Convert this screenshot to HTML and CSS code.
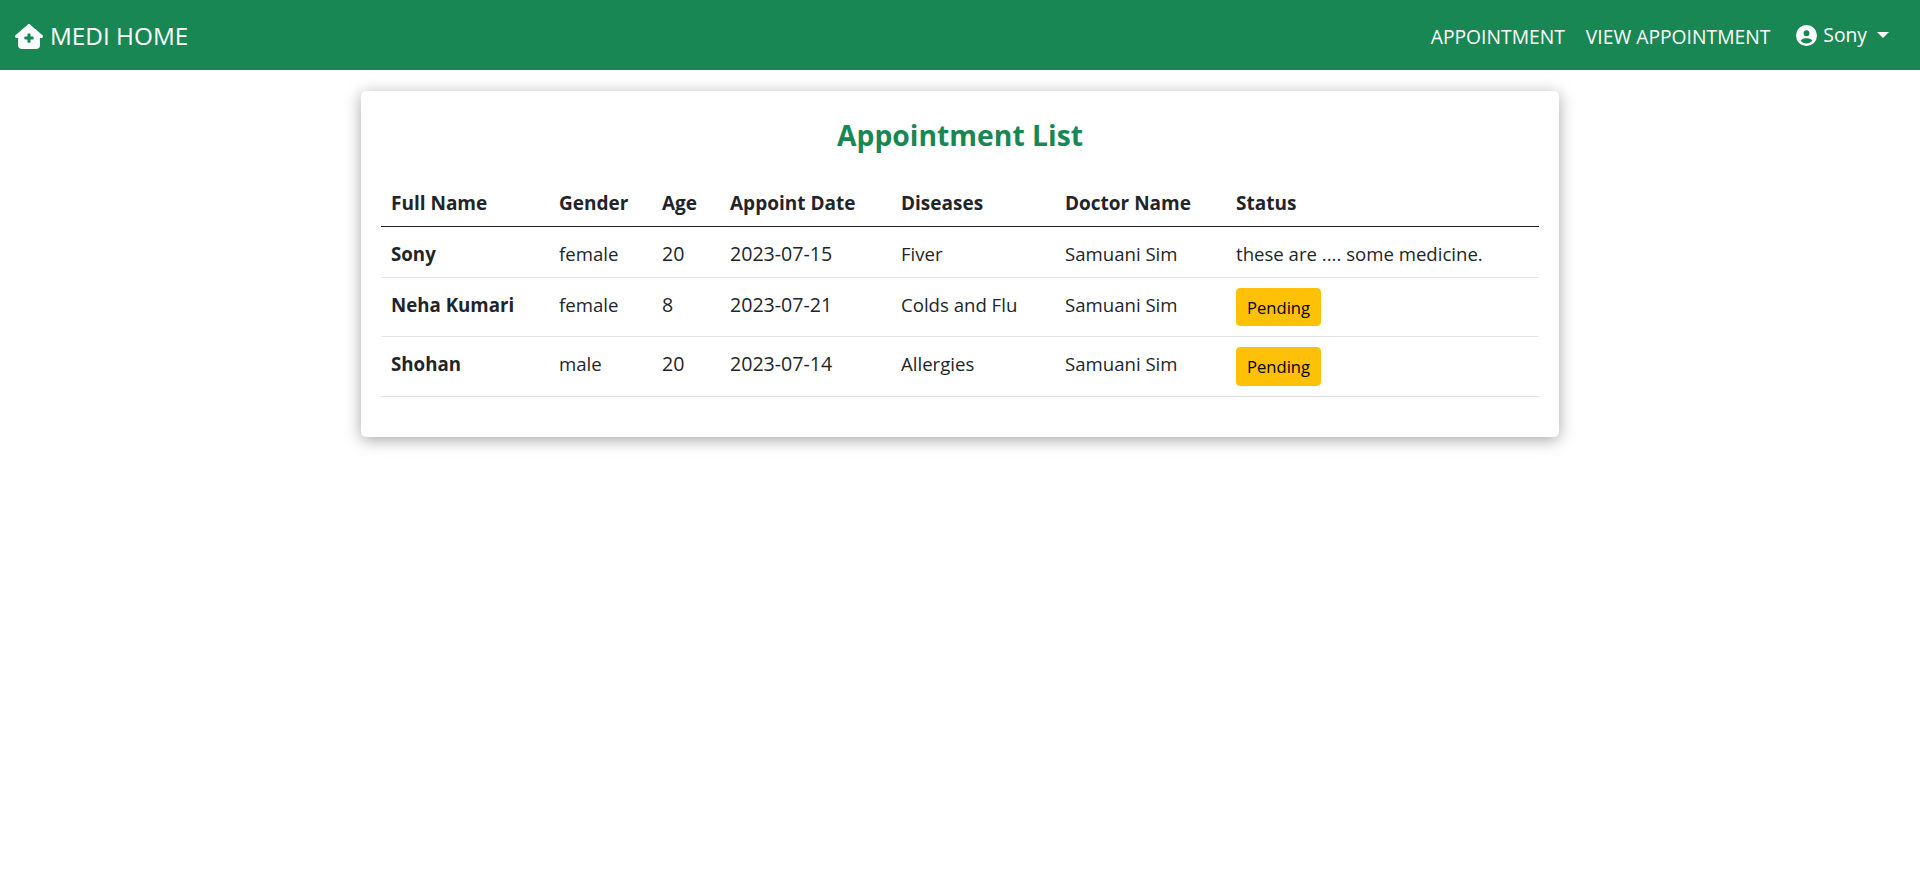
FILE: index.html
```html
<!DOCTYPE html>
<html lang="en">
<head>
<meta charset="UTF-8">
<title>Appointment List</title>
<link rel="stylesheet" href="styles.css">
</head>
<body>
<nav class="navbar">
    <a class="brand" href="#">
        <svg class="brand-icon" viewBox="0 0 576 512"><path fill-rule="evenodd" d="M543.8 287.6c17 0 32-14 32-32.1c1-9-3-17-11-24L309.5 7c-6-5-14-7-21.5-7s-15 1-22 8L10 231.5c-7 7-10 15-10 24c0 18 14 32 32 32h32V448c0 35.3 28.7 64 64 64H448.5c35.5 0 64.2-28.8 64-64.3l-.7-160.2h32zM256 208c0-8.8 7.2-16 16-16h32c8.8 0 16 7.2 16 16v48h48c8.8 0 16 7.2 16 16v32c0 8.8-7.2 16-16 16H320v48c0 8.8-7.2 16-16 16H272c-8.8 0-16-7.2-16-16V320H208c-8.8 0-16-7.2-16-16V272c0-8.8 7.2-16 16-16h48V208z"/></svg>
        MEDI HOME
    </a>
    <div class="nav-links">
        <a class="nav-link" href="#">APPOINTMENT</a>
        <a class="nav-link" href="#">VIEW APPOINTMENT</a>
        <a class="nav-user" href="#">
            <svg class="user-icon" viewBox="0 0 512 512"><path d="M399 384.2C376.9 345.8 335.4 320 288 320H224c-47.4 0-88.9 25.8-111 64.2c35.2 39.2 86.2 63.8 143 63.8s107.8-24.7 143-63.8zM0 256a256 256 0 1 1 512 0A256 256 0 1 1 0 256zm256 16a72 72 0 1 0 0-144 72 72 0 1 0 0 144z"/></svg>
            Sony
            <span class="caret"></span>
        </a>
    </div>
</nav>
<main class="card">
    <h3 class="card-title">Appointment List</h3>
    <table class="table">
        <colgroup>
            <col class="col-name">
            <col class="col-gender">
            <col class="col-age">
            <col class="col-date">
            <col class="col-disease">
            <col class="col-doctor">
            <col>
        </colgroup>
        <thead>
            <tr><th>Full Name</th><th>Gender</th><th>Age</th><th>Appoint Date</th><th>Diseases</th><th>Doctor Name</th><th>Status</th></tr>
        </thead>
        <tbody>
            <tr><th>Sony</th><td>female</td><td class="num">20</td><td class="num">2023-07-15</td><td>Fiver</td><td>Samuani Sim</td><td>these are .... some medicine.</td></tr>
            <tr><th>Neha Kumari</th><td>female</td><td class="num">8</td><td class="num">2023-07-21</td><td>Colds and Flu</td><td>Samuani Sim</td><td class="btn-cell"><a class="badge-btn" href="#">Pending</a></td></tr>
            <tr><th>Shohan</th><td>male</td><td class="num">20</td><td class="num">2023-07-14</td><td>Allergies</td><td>Samuani Sim</td><td class="btn-cell"><a class="badge-btn" href="#">Pending</a></td></tr>
        </tbody>
    </table>
</main>
</body>
</html>
```

FILE: styles.css
```css
html, body { height: 100%; }
body { margin: 0; font-family: "Open Sans", "Noto Sans", sans-serif; font-size: 18.6px; line-height: 30px; color: #212529; background: #fff; }
a { color: inherit; text-decoration: none; }

.navbar { display: flex; justify-content: space-between; align-items: center; box-sizing: border-box; height: 70px; padding: 2px 31px 0 15px; background: #198754; color: #fff; }
.brand { display: flex; align-items: center; gap: 7px; font-size: 24.3px; }
.brand-icon { width: 28px; height: 25px; fill: #fff; }
.nav-links { display: flex; align-items: center; gap: 21px; padding-top: 2px; font-size: 19.3px; }
.nav-user { display: flex; align-items: center; gap: 6px; margin-left: 5px; margin-top: -4px; }
.user-icon { width: 21px; height: 21px; fill: #fff; }
.caret { width: 0; height: 0; margin-left: 4px; border-top: 6px solid #fff; border-left: 6px solid transparent; border-right: 6px solid transparent; }

.card { width: 1158px; margin: 21px auto 0; padding: 20px 20px 40px; border-radius: 5px; background: #fff; box-shadow: 0 3px 16px rgba(0, 0, 0, 0.35); }
.card-title { margin: 0 0 15px; font-size: 28.3px; line-height: 49px; font-weight: 700; text-align: center; color: #198754; }

.table { width: 100%; table-layout: fixed; border-collapse: collapse; }
.col-name { width: 168px; }
.col-gender { width: 103px; }
.col-age { width: 68px; }
.col-date { width: 171px; }
.col-disease { width: 164px; }
.col-doctor { width: 171px; }
.table th, .table td { padding: 12px 10px 8px; text-align: left; vertical-align: top; border-bottom: 1px solid #dee2e6; font-weight: 400; white-space: nowrap; }
.table th { font-size: 18.7px; font-weight: 700; }
.table thead th { padding: 13px 10px 8px; font-size: 19px; border-bottom: 1px solid #212529; }
.table .num { font-size: 19.6px; }
.table .btn-cell { padding: 10px; }
.badge-btn { display: inline-block; padding: 6px 10px 4px; border: 1px solid #ffc107; border-radius: 4px; background: #ffc107; color: #000; font-size: 16.6px; line-height: 26.25px; }
```
